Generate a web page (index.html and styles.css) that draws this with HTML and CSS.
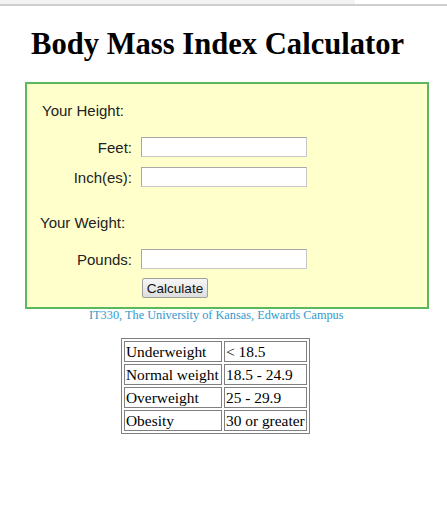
FILE: index.html
```html
<!DOCTYPE html>
<html>
<head>
<meta charset="utf-8">
<title>BMI Calculator</title>
<link rel="stylesheet" href="styles.css">
</head>
<body>
<div class="topbar"><div class="topbar-light"></div></div>
<div class="page">
  <h1 class="title">Body Mass Index Calculator</h1>
  <form class="calc">
    <div class="section-label">Your Height:</div>
    <div class="row">
      <label class="lbl">Feet:</label>
      <input class="field" type="text">
    </div>
    <div class="row">
      <label class="lbl">Inch(es):</label>
      <input class="field" type="text">
    </div>
    <div class="section-label weight">Your Weight:</div>
    <div class="row">
      <label class="lbl">Pounds:</label>
      <input class="field" type="text">
    </div>
    <div class="row btn-row">
      <span class="lbl"></span>
      <button class="btn" type="button">Calculate</button>
    </div>
  </form>
  <div class="credit">IT330, The University of Kansas, Edwards Campus</div>
  <table class="bmi">
    <tr><td>Underweight</td><td>&lt; 18.5</td></tr>
    <tr><td>Normal weight</td><td>18.5 - 24.9</td></tr>
    <tr><td>Overweight</td><td>25 - 29.9</td></tr>
    <tr><td>Obesity</td><td>30 or greater</td></tr>
  </table>
</div>
</body>
</html>
```
FILE: styles.css
```css
html, body {
  margin: 0;
  padding: 0;
  background: #ffffff;
}
body {
  font-family: "Liberation Serif", "Times New Roman", serif;
  color: #000;
}
.topbar {
  height: 4px;
  border-bottom: 2px solid #cfcfcf;
  background: #ffffff;
}
.topbar-light {
  width: 355px;
  height: 4px;
  background: #f3f3f3;
}
.page {
  padding: 0 18px 0 25px;
}
.title {
  font-family: "Liberation Serif", "Times New Roman", serif;
  font-weight: bold;
  font-size: 30.6px;
  margin: 21px 0 0 6px;
  line-height: 34px;
}
.calc {
  margin-top: 21px;
  width: 400px;
  background: #ffffcc;
  border: 2px solid #5cb85c;
  padding: 18px 0 9px 0;
  font-family: "Liberation Sans", Arial, sans-serif;
  font-size: 15px;
  color: #222;
}
.section-label {
  margin-left: 15px;
  line-height: 17px;
  margin-bottom: 18px;
}
.section-label.weight {
  margin-left: 13px;
  margin-top: 27px;
}
.row {
  display: flex;
  align-items: center;
  margin-bottom: 10px;
}
.lbl {
  width: 105px;
  text-align: right;
  margin-right: 9px;
}
.field {
  box-sizing: border-box;
  width: 166px;
  height: 20px;
  margin: 0;
  padding: 0 2px;
  border: 1px solid #a9a9a9;
  border-right-color: #c8c8c8;
  border-bottom-color: #c8c8c8;
  background: #fff;
}
.btn-row {
  margin-top: -1px;
  margin-bottom: 0;
}
.btn {
  box-sizing: border-box;
  height: 20px;
  width: 66px;
  margin-left: 1px;
  padding: 0;
  font-family: "Liberation Sans", Arial, sans-serif;
  font-size: 13.5px;
  color: #111;
  background: linear-gradient(#f6f6f6, #dedede);
  border: 1px solid #a0a0a0;
  border-radius: 2px;
}
.credit {
  margin: -1px 0 0 64px;
  font-size: 12.3px;
  line-height: 14px;
  color: #3399cc;
}
.bmi {
  margin: 16px 0 0 96px;
  border: 1px solid #808080;
  border-spacing: 2px;
  font-size: 15.4px;
}
.bmi td {
  border: 1px solid #808080;
  padding: 1px 1px;
  line-height: 17px;
}
.bmi td:first-child {
  width: 94px;
}
```
